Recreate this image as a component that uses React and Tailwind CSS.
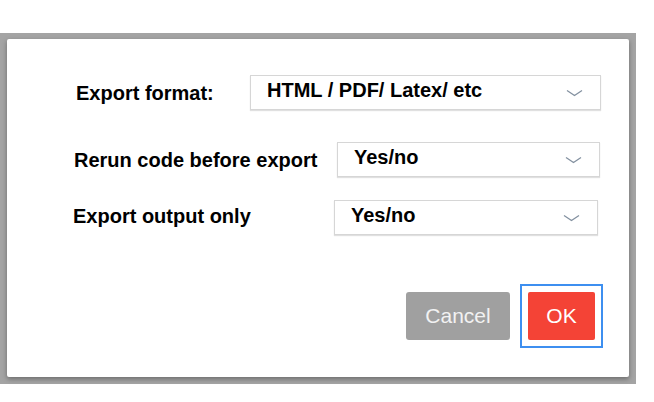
import { useState } from "react";

function Chevron() {
  return (
    <svg width="17" height="8" viewBox="0 0 17 8" className="shrink-0">
      <polyline points="1,1.5 8.5,6.5 16,1.5" fill="none" stroke="#8391a0" strokeWidth="1.3" />
    </svg>
  );
}

function FakeSelect({ value, className }) {
  return (
    <div
      className={`flex h-[35px] items-center justify-between border border-[#d6d6d6] bg-white pl-[16px] pr-[17px] shadow-[0_1px_1px_rgba(0,0,0,0.12)] ${className}`}
    >
      <span className="mb-[5px] text-[20px] font-bold leading-none text-black">{value}</span>
      <Chevron />
    </div>
  );
}

export default function App() {
  const [format] = useState("HTML / PDF/ Latex/ etc");

  return (
    <div
      className="min-h-[402px] w-[654px] bg-white pt-[33px]"
      style={{ fontFamily: '"Liberation Sans", Arial, sans-serif' }}
    >
      <div className="h-[351px] w-[636px] bg-[#a4a4a4] pb-[7px] pl-[7px] pr-[7px] pt-[6px]">
        <div className="flex h-[338px] w-[622px] flex-col rounded-[2px] bg-white pt-[36px] shadow-[0_2px_5px_rgba(0,0,0,0.35)]">
          <div className="flex items-center">
            <label className="ml-[69px] w-[174px] text-[20px] font-bold text-black">Export format:</label>
            <FakeSelect value={format} className="w-[351px]" />
          </div>

          <div className="mt-[32px] flex items-center">
            <label className="ml-[67px] w-[263px] text-[20px] font-bold text-black">Rerun code before export</label>
            <FakeSelect value="Yes/no" className="w-[263px]" />
          </div>

          <div className="mt-[23px] flex items-center">
            <label className="mb-[4px] ml-[66px] w-[261px] text-[20px] font-bold text-black">Export output only</label>
            <FakeSelect value="Yes/no" className="w-[264px]" />
          </div>

          <div className="mt-[49px] flex items-center justify-end gap-[10px] pr-[26px]">
            <button className="h-[48px] w-[104px] rounded-[3px] bg-[#a0a0a0] text-[21px] text-[#f2f2f2]">
              Cancel
            </button>
            <div className="border-2 border-[#3d8ff0] px-[6px] py-[6px]">
              <button className="h-[48px] w-[67px] rounded-[2px] bg-[#f44336] text-[21px] text-white">OK</button>
            </div>
          </div>
        </div>
      </div>
    </div>
  );
}
